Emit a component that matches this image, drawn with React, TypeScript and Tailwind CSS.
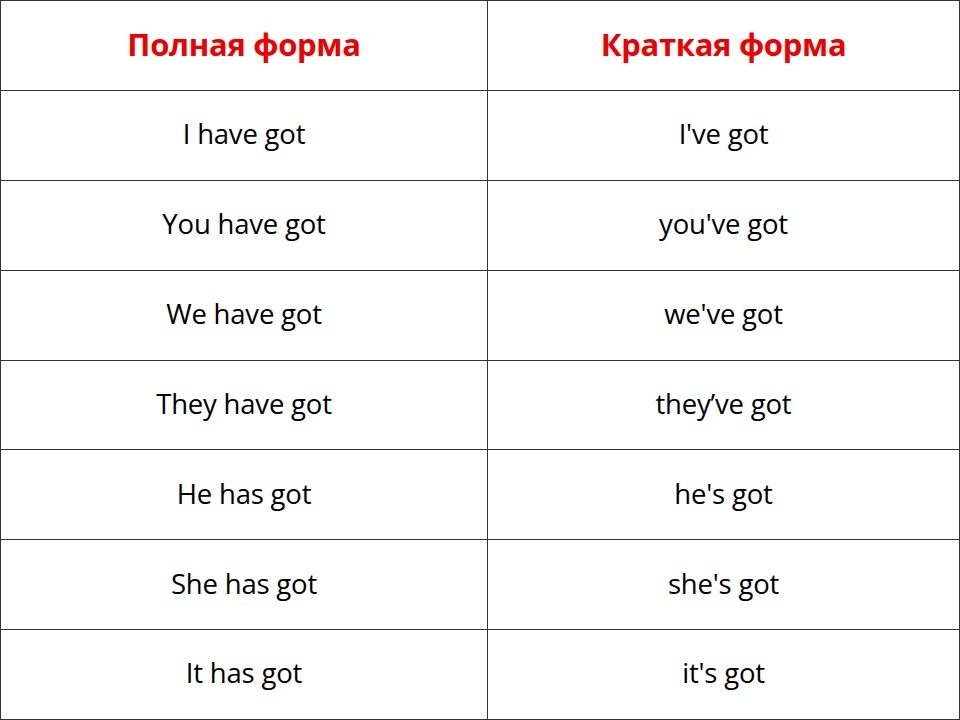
const ROWS: [string, string][] = [
  ['I have got', "I've got"],
  ['You have got', "you've got"],
  ['We have got', "we've got"],
  ['They have got', 'they’ve got'],
  ['He has got', "he's got"],
  ['She has got', "she's got"],
  ['It has got', "it's got"],
]

function Cell({ children, head }: { children: string; head?: boolean }) {
  return (
    <div
      className={`flex items-center justify-center border-r border-b border-[#333] pb-[3px] ${
        head ? 'text-[#ee0000] font-bold text-[31px] tracking-[-0.3px]' : 'text-black text-[27.5px] tracking-[-0.2px]'
      }`}
    >
      {children}
    </div>
  )
}

export default function App() {
  return (
    <div
      className="w-[960px] h-[720px] bg-white border-l border-t border-[#333] grid grid-cols-[487px_1fr] grid-rows-8"
      style={{ fontFamily: '"Open Sans", "Noto Sans", sans-serif' }}
    >
      <Cell head>Полная форма</Cell>
      <Cell head>Краткая форма</Cell>
      {ROWS.map(([full, short]) => (
        <>
          <Cell key={full}>{full}</Cell>
          <Cell key={short}>{short}</Cell>
        </>
      ))}
    </div>
  )
}
